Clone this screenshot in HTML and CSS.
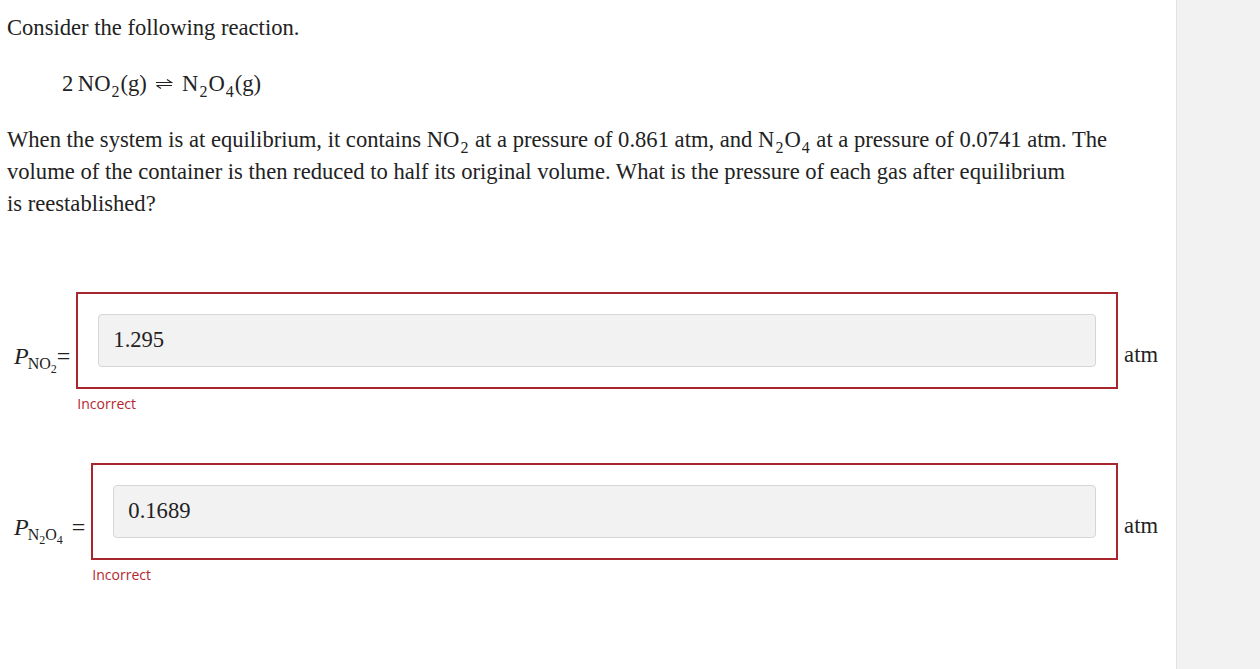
FILE: index.html
```html
<!DOCTYPE html>
<html>
<head>
<meta charset="utf-8">
<link rel="stylesheet" href="styles.css">
</head>
<body>
<div class="page">
  <main class="main">
    <p class="intro">Consider the following reaction.</p>
    <div class="equation">2&#8201;NO<sub>2</sub>(g) <svg class="harpoon" width="18" height="10" viewBox="0 0 18 10"><path d="M1 3.5 H16.5 L12 0.5 M1.5 6.5 H17 M1.5 6.5 L6 9.5" fill="none" stroke="#222" stroke-width="1.1"/></svg> N<sub>2</sub>O<sub>4</sub>(g)</div>
    <p class="question">When the system is at equilibrium, it contains NO<sub>2</sub> at a pressure of 0.861 atm, and N<sub>2</sub>O<sub>4</sub> at a pressure of 0.0741 atm. The volume of the container is then reduced to half its original volume. What is the pressure of each gas after equilibrium<br>is reestablished?</p>

    <div class="answer-row first">
      <div class="label"><i>P</i><span class="lsub">NO<span class="lsub2">2</span></span>=</div>
      <div class="field">
        <div class="box"><div class="input">1.295</div></div>
        <div class="feedback">Incorrect</div>
      </div>
      <div class="unit">atm</div>
    </div>

    <div class="answer-row second">
      <div class="label"><i>P</i><span class="lsub">N<span class="lsub2">2</span>O<span class="lsub2">4</span></span><span class="eq-gap">=</span></div>
      <div class="field">
        <div class="box"><div class="input">0.1689</div></div>
        <div class="feedback">Incorrect</div>
      </div>
      <div class="unit">atm</div>
    </div>
  </main>
  <aside class="side"></aside>
</div>
</body>
</html>
```
FILE: styles.css
```css
html, body {
  margin: 0;
  padding: 0;
  background: #ffffff;
}
.page {
  display: flex;
  width: 1260px;
  height: 669px;
  overflow: hidden;
}
.main {
  flex: 0 0 1176px;
  box-sizing: border-box;
  padding: 12px 0 0 7px;
  font-family: "Liberation Serif", "Times New Roman", serif;
  font-size: 22.6px;
  line-height: 32px;
  color: #222222;
}
.side {
  flex: 1;
  background: #f2f2f2;
  border-left: 1px solid #e2e2e2;
}
.intro {
  margin: 0;
}
.equation {
  margin-top: 24px;
  padding-left: 55px;
}
.harpoon {
  vertical-align: 2px;
  margin: 0 3px;
}
sub {
  font-size: 16px;
  line-height: 1;
  vertical-align: -6px;
  margin: 0 1px;
}
.question {
  margin: 24px 0 0 0;
  width: 1120px;
}
.answer-row {
  display: flex;
  align-items: flex-start;
  padding-left: 7px;
  width: 1151px;
  box-sizing: border-box;
}
.answer-row.first {
  margin-top: 72px;
}
.answer-row.second {
  margin-top: 50px;
}
.label {
  margin-top: 48px;
  font-size: 24px;
  line-height: 32px;
  white-space: nowrap;
  margin-right: 6px;
}
.label i {
  font-style: italic;
}
.lsub {
  font-size: 16px;
  vertical-align: -5px;
  line-height: 1;
  margin-left: -1px;
}
.lsub2 {
  font-size: 12px;
  vertical-align: -4px;
}
.eq-gap {
  margin-left: 9px;
}
.field {
  flex: 1;
  display: flex;
  flex-direction: column;
}
.box {
  border: 2px solid #a8262d;
  padding: 20px 20px;
}
.input {
  height: 53px;
  box-sizing: border-box;
  border: 1px solid #d6d6d6;
  border-radius: 4px;
  background: #f2f2f2;
  padding: 9px 14px 0 14px;
  font-size: 22.6px;
  line-height: 32px;
  color: #222222;
}
.feedback {
  margin-top: 6px;
  font-family: "Open Sans", "Liberation Sans", sans-serif;
  font-size: 14px;
  line-height: 18px;
  color: #b3262e;
  padding-left: 1px;
}
.unit {
  margin-top: 47px;
  margin-left: 6px;
  line-height: 32px;
}
```
